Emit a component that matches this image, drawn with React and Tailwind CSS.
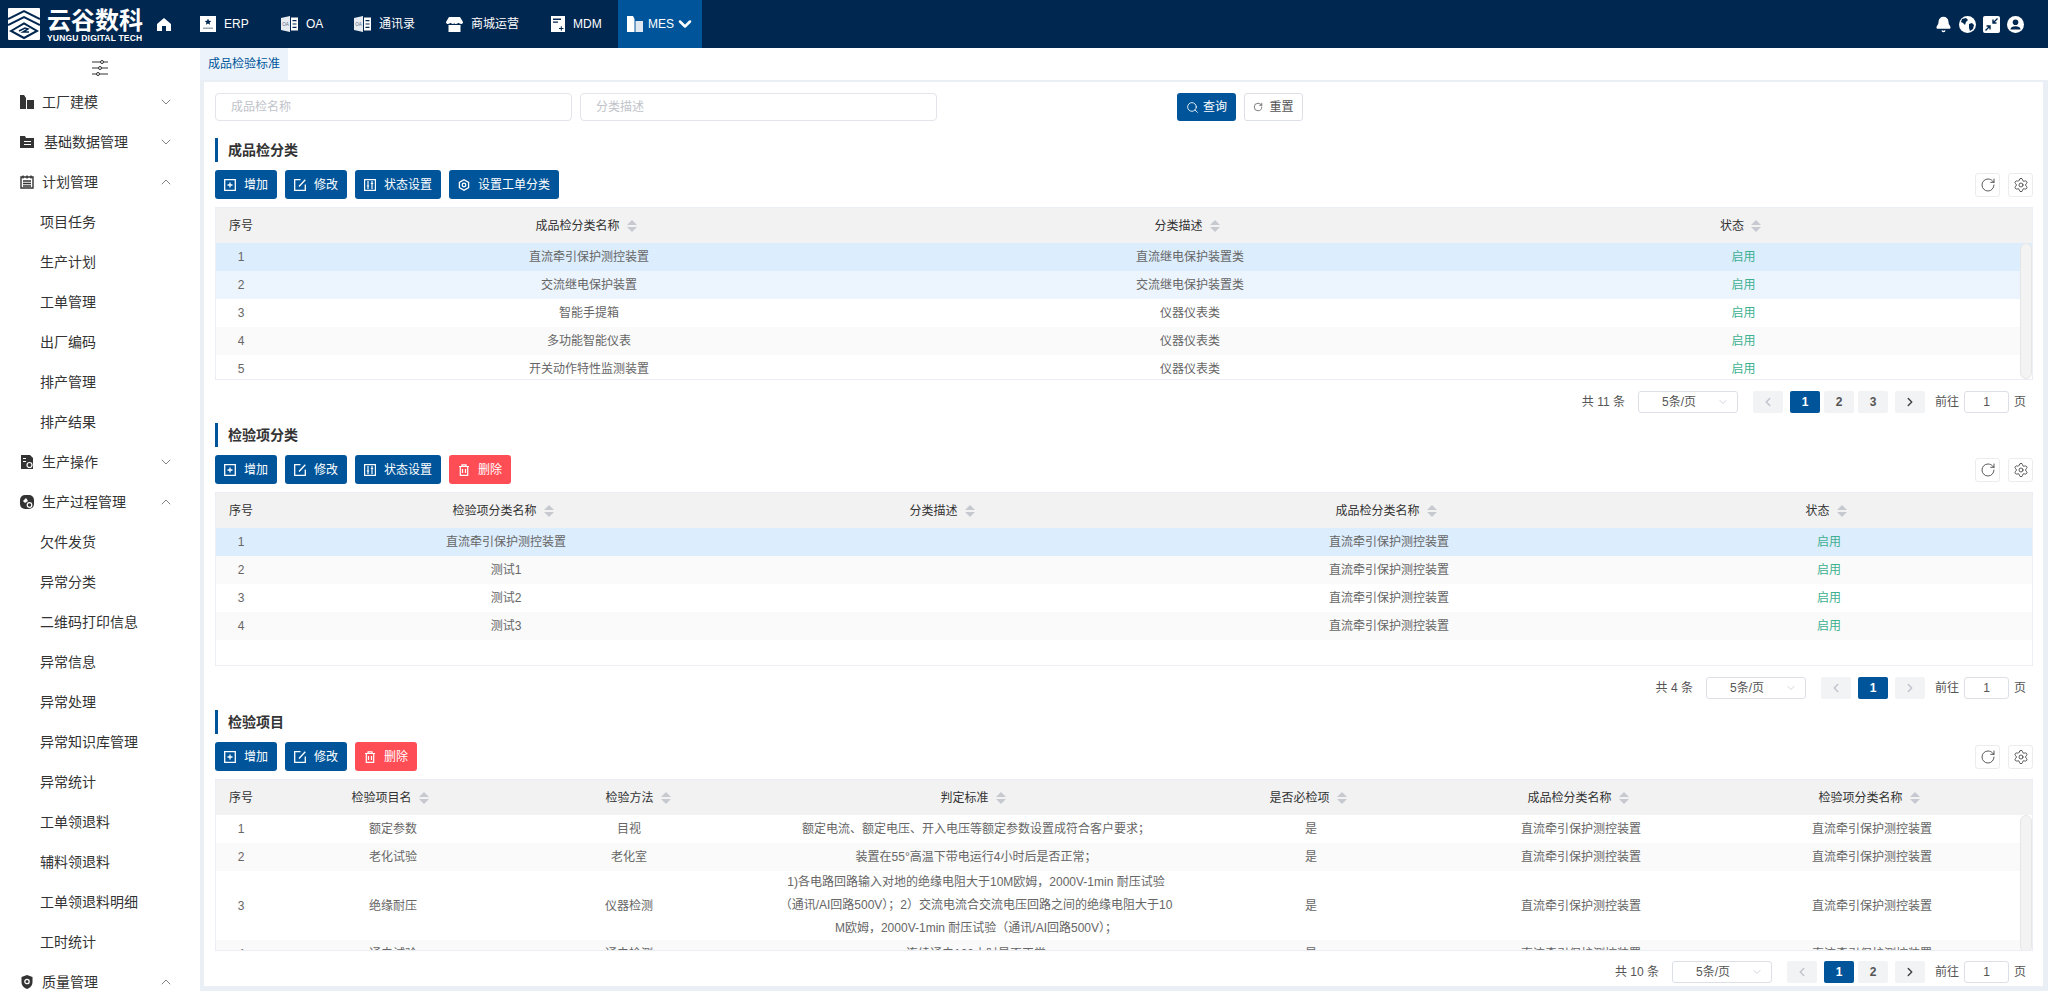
import { ChevronDown, ChevronUp, ChevronLeft, ChevronRight, Search, RotateCw, Settings, Bell } from 'lucide-react';

const sideMenu = [
    { label: '工厂建模', icon: 'factory', open: false },
    { label: '基础数据管理', icon: 'folder', open: false },
    { label: '计划管理', icon: 'book', open: true, children: ['项目任务', '生产计划', '工单管理', '出厂编码', '排产管理', '排产结果'] },
    { label: '生产操作', icon: 'op', open: false },
    { label: '生产过程管理', icon: 'proc', open: true, children: ['欠件发货', '异常分类', '二维码打印信息', '异常信息', '异常处理', '异常知识库管理', '异常统计', '工单领退料', '辅料领退料', '工单领退料明细', '工时统计'] },
    { label: '质量管理', icon: 'shield', open: true },
];

function MenuIcon({ type }) {
    if (type === 'factory') return (
        <svg viewBox="0 0 14 14" className="w-[14px] h-[14px]" fill="#333"><path d="M0 0h4l2 3v11H0z" /><path d="M7 5h7v9H7z" /></svg>
    );
    if (type === 'folder') return (
        <svg viewBox="0 0 14 14" className="w-[14px] h-[14px]" fill="#333"><path d="M0 1h5l1 2h8v10H0z" /><path d="M4 6h7v1H4zM4 9h7v1H4z" fill="#fff" /></svg>
    );
    if (type === 'book') return (
        <svg viewBox="0 0 14 14" className="w-[14px] h-[14px]" fill="none" stroke="#333" strokeWidth="1.4"><path d="M1 2h12v11H1zM3 .5v3M7 .5v3M11 .5v3M3 6h8M3 8.500h8M3 11h8" /></svg>
    );
    if (type === 'op') return (
        <svg viewBox="0 0 14 14" className="w-[14px] h-[14px]"><path d="M1 0h9l3 3v11H1z" fill="#333" /><path d="M3 3h3v1H3zM3 6h3v1H3z" fill="#fff" /><circle cx="9.500" cy="10" r="2.500" fill="none" stroke="#fff" strokeWidth="1.200" /></svg>
    );
    if (type === 'proc') return (
        <svg viewBox="0 0 14 14" className="w-[14px] h-[14px]"><rect width="14" height="14" rx="5" fill="#333" /><path d="M3 6l3-3 2 3-3 2z" fill="#fff" /><circle cx="9.500" cy="10" r="2.300" fill="none" stroke="#fff" strokeWidth="1.200" /></svg>
    );
    return (
        <svg viewBox="0 0 14 14" className="w-[14px] h-[14px]"><path d="M7 0l5.500 2v5c0 3.500-2.500 6-5.500 7-3-1-5.500-3.500-5.500-7V2z" fill="#333" /><circle cx="7" cy="6.500" r="2.200" fill="none" stroke="#fff" strokeWidth="1.300" /></svg>
    );
}

function Logo() {
    return (
        <div className="flex items-center w-[157px] pl-[8px] shrink-0">
            <svg viewBox="0 0 32 32" className="w-[32px] h-[32px] shrink-0">
                <rect width="32" height="32" rx="1" fill="#fff" />
                <path d="M0 11 16 3l16 8M0 17 16 9l16 8" fill="none" stroke="#00274f" strokeWidth="2" />
                <path d="M3 23 16 15.500 29 23 16 30z" fill="none" stroke="#00274f" strokeWidth="2" />
                <path d="M11 23 17 20l3 1-5 3 6 0" fill="none" stroke="#00274f" strokeWidth="1.500" />
            </svg>
            <div className="ml-[7px] pt-[3px] flex flex-col text-white">
                <span className="text-[24px] leading-[24px] font-bold whitespace-nowrap">云谷数科</span>
                <span className="text-[8.5px] leading-[10px] font-bold tracking-[0.2px] whitespace-nowrap">YUNGU DIGITAL TECH</span>
            </div>
        </div>
    );
}

function NavGlyph({ type }) {
    if (type === 'erp') return (
        <svg viewBox="0 0 16 16" className="w-[16px] h-[16px]"><path d="M0 0h16v16H0z" fill="#fff" /><path d="M8 2.500l1 2.200 2.300.2-1.700 1.500.5 2.300L8 7.600 5.900 8.700l.5-2.300L4.700 4.900 7 4.700z" fill="#00274f" /><path d="M3 11.500h10V13H3z" fill="#9aa7b5" /></svg>
    );
    if (type === 'book') return (
        <svg viewBox="0 0 17 16" className="w-[17px] h-[16px]">
            <path d="M0 2l9-2v16l-9-2z" fill="#e6ebf1" />
            <path d="M10 1.500h7v13h-7z" fill="#fff" />
            <path d="M11.500 4h4v1.200h-4zM11.500 7.400h4v1.200h-4zM11.500 10.800h4V12h-4z" fill="#00274f" />
            <text x="1.200" y="10" fontSize="4.500" fill="#5b6b7d">OA</text>
        </svg>
    );
    if (type === 'shop') return (
        <svg viewBox="0 0 17 15" className="w-[17px] h-[15px]"><path d="M3 0h11l3 5c0 1.500-1 2-2 2s-2-.5-2.500-1.200C12 6.500 11 7 10 7s-1.500-.5-1.500-.8C8 6.500 7 7 6.500 7S5 6.500 4.500 5.800C4 6.500 3 7 2 7S0 6.500 0 5z" fill="#fff" /><path d="M2.500 8h12v7h-12z" fill="#fff" /></svg>
    );
    if (type === 'mdm') return (
        <svg viewBox="0 0 14 16" className="w-[14px] h-[16px]"><path d="M0 0h14v16H0z" fill="#fff" /><path d="M2 2.500h8v1.400H2zM2 5.500h5v1.200H2zM8 12h4.500v1H8zM9.800 10.200h1v4.500h-1z" fill="#00274f" /></svg>
    );
    return (
        <svg viewBox="0 0 16 16" className="w-[16px] h-[16px]" fill="#fff"><path d="M0 0h6l1.500 3v13H0z" /><path d="M8.500 5H16v11H8.500z" fill="#dfe7f0" /></svg>
    );
}

const navItems = [
    { label: 'ERP', icon: 'erp', w: 'w-[81px]' },
    { label: 'OA', icon: 'book', w: 'w-[73px]' },
    { label: '通讯录', icon: 'book', w: 'w-[92px]' },
    { label: '商城运营', icon: 'shop', w: 'w-[105px]' },
    { label: 'MDM', icon: 'mdm', w: 'w-[67px]' },
];

function TopBar() {
    return (
        <header className="h-12 bg-[#00274f] flex items-center text-white shrink-0">
            <Logo />
            <svg viewBox="0 0 14 13" className="w-[14px] h-[13px] mr-[29px] shrink-0" fill="#fff"><path d="M7 0l7 6v7H9V8H5v5H0V6z" /></svg>
            {navItems.map(item => (
                <div key={item.label} className={`${item.w} flex items-center gap-[8px] text-xs shrink-0`}>
                    <NavGlyph type={item.icon} />
                    <span>{item.label}</span>
                </div>
            ))}
            <div className="w-[84px] h-12 bg-[#00559a] flex items-center pl-[9px] text-xs shrink-0">
                <NavGlyph type="mes" />
                <span className="ml-[5px]">MES</span>
                <ChevronDown className="w-[20px] h-[20px] ml-[1px]" strokeWidth={3} />
            </div>
            <div className="ml-auto flex items-center gap-[7px] pr-[24px]">
                <Bell className="w-[17px] h-[17px]" fill="#fff" />
                <svg viewBox="0 0 17 17" className="w-[17px] h-[17px]">
                    <circle cx="8.500" cy="8.500" r="8.500" fill="#fff" />
                    <path d="M3 3l4-1 2 2-2 2-1 3-2-2-2-1zM10 8l3-1 2 2-1 4-3 2-1-3z" fill="#00274f" />
                </svg>
                <svg viewBox="0 0 17 17" className="w-[17px] h-[17px]">
                    <rect width="17" height="17" rx="2" fill="#fff" />
                    <path d="M14.500 2.500 10 7M10 3.500V7h3.500M2.500 14.500 7 10M7 13.500V10H3.500" fill="none" stroke="#00274f" strokeWidth="1.400" />
                </svg>
                <svg viewBox="0 0 17 17" className="w-[17px] h-[17px]">
                    <circle cx="8.500" cy="8.500" r="8.500" fill="#fff" />
                    <circle cx="8.500" cy="6.200" r="2.800" fill="#00274f" />
                    <path d="M3.500 13.500c0-2.200 2.200-3.200 5-3.200s5 1 5 3.200z" fill="#00274f" />
                </svg>
            </div>
        </header>
    );
}

function Sidebar() {
    return (
        <aside className="w-[200px] shrink-0 bg-white overflow-hidden text-sm text-[#333]">
            <div className="h-[34px] flex justify-center pt-[12px]">
                <svg viewBox="0 0 16 16" className="w-[16px] h-[16px]" fill="#fff" stroke="#333" strokeWidth="1">
                    <path d="M0 2h16M0 8h16M0 14h16" />
                    <circle cx="10" cy="2" r="1.500" />
                    <circle cx="8" cy="8" r="1.500" />
                    <circle cx="6" cy="14" r="1.500" />
                </svg>
            </div>
            {sideMenu.map(menu => (
                <div key={menu.label}>
                    <div className="h-10 flex items-center pl-[20px] pr-[26px]">
                        <MenuIcon type={menu.icon} />
                        <span className={menu.icon === 'folder' ? 'ml-[10px]' : 'ml-[8px]'}>{menu.label}</span>
                        {menu.open
                            ? <ChevronUp className="w-[16px] h-[16px] ml-auto text-[#555]" strokeWidth={1.1} />
                            : <ChevronDown className="w-[16px] h-[16px] ml-auto text-[#555]" strokeWidth={1.1} />}
                    </div>
                    {menu.children && menu.children.map(c => (
                        <div key={c} className="h-10 flex items-center pl-[40px]">{c}</div>
                    ))}
                </div>
            ))}
        </aside>
    );
}

function IconAdd() {
    return <svg viewBox="0 0 12 12" className="w-[12px] h-[12px]" fill="none" stroke="#fff" strokeWidth="1.300"><path d="M.7.700h10.600v10.600H.7zM6 3.500v5M3.500 6h5" /></svg>;
}

function IconEdit() {
    return <svg viewBox="0 0 12 12" className="w-[12px] h-[12px]" fill="none" stroke="#fff" strokeWidth="1.300"><path d="M6.500.7H.7v10.600h10.600V5.500M5 7.500 11.300.7" /></svg>;
}

function IconStatus() {
    return <svg viewBox="0 0 12 12" className="w-[12px] h-[12px]" fill="none" stroke="#fff" strokeWidth="1.200"><path d="M.6.600h10.800v10.800H.6zM4 2v8M8 2v8M2.800 7h2.400M6.800 4.500h2.400" /></svg>;
}

function IconGear() {
    return <svg viewBox="0 0 12 12" className="w-[12px] h-[12px]" fill="none" stroke="#fff" strokeWidth="1.300"><path d="M6 .8 10.600 3.400v5.200L6 11.200 1.400 8.600V3.400z" /><circle cx="6" cy="6" r="1.800" /></svg>;
}

function IconTrash() {
    return <svg viewBox="0 0 12 12" className="w-[12px] h-[12px]" fill="none" stroke="#fff" strokeWidth="1.200"><path d="M1 2.500h10M4 2.500V.8h4v1.700M2.300 2.500v8.800h7.400V2.500M4.500 5v4M7.500 5v4" /></svg>;
}

function Btn({ icon: Icon, label, danger }) {
    return (
        <button className={`h-[29px] px-[9px] rounded-[3px] flex items-center gap-[8px] text-xs text-white ${danger ? 'bg-[#ff4d55]' : 'bg-[#00559a]'}`}>
            <Icon />
            <span>{label}</span>
        </button>
    );
}

function SectionTitle({ children }) {
    return (
        <div className="h-6 border-l-[3px] border-[#00559a] pl-[10px] flex items-center text-sm font-bold text-[#333]">{children}</div>
    );
}

function Toolbar({ buttons }) {
    return (
        <div className="flex items-center justify-between mt-2">
            <div className="flex gap-2">
                {buttons.map(b => <Btn key={b.label} {...b} />)}
            </div>
            <div className="flex gap-2">
                <div className="w-[25px] h-6 border border-[#ececec] rounded-[3px] flex items-center justify-center">
                    <RotateCw className="w-[16px] h-[16px] text-[#333]" strokeWidth={1.2} />
                </div>
                <div className="w-[25px] h-6 border border-[#ececec] rounded-[3px] flex items-center justify-center">
                    <Settings className="w-[16px] h-[16px] text-[#333]" strokeWidth={1.2} />
                </div>
            </div>
        </div>
    );
}

function SortMark() {
    return (
        <span className="inline-flex flex-col gap-[2px] ml-[7px] align-middle">
            <span className="w-0 h-0 border-x-[5px] border-x-transparent border-b-[5px] border-b-[#c6c9d0]" />
            <span className="w-0 h-0 border-x-[5px] border-x-transparent border-t-[5px] border-t-[#c6c9d0]" />
        </span>
    );
}

function Pager({ total, pages, disableNext, top }) {
    return (
        <div className={`flex items-center justify-end h-[22px] pr-[7px] text-xs text-[#555] ${top}`}>
            <span>共 {total} 条</span>
            <div className="w-[100px] h-[22px] ml-[13px] border border-[#dcdfe6] rounded-[3px] flex items-center justify-between pl-[23px] pr-[8px]">
                <span>5条/页</span>
                <ChevronDown className="w-[12px] h-[12px] text-[#c0c4cc]" strokeWidth={1.5} />
            </div>
            <div className="w-[30px] h-[22px] ml-[15px] mr-[7px] bg-[#f2f3f5] rounded-[2px] flex items-center justify-center">
                <ChevronLeft className="w-[14px] h-[14px] text-[#c0c4cc]" strokeWidth={2.5} />
            </div>
            {pages.map(p => (
                <div key={p} className={`w-[30px] h-[22px] mr-[4px] rounded-[2px] flex items-center justify-center font-bold ${p === 1 ? 'bg-[#00559a] text-white' : 'bg-[#f2f3f5] text-[#555]'}`}>{p}</div>
            ))}
            <div className="w-[30px] h-[22px] ml-[3px] bg-[#f2f3f5] rounded-[2px] flex items-center justify-center">
                <ChevronRight className={`w-[14px] h-[14px] ${disableNext ? 'text-[#c0c4cc]' : 'text-[#444]'}`} strokeWidth={2.5} />
            </div>
            <span className="ml-[10px]">前往</span>
            <div className="w-[45px] h-[22px] ml-[5px] border border-[#dcdfe6] rounded-[3px] flex items-center justify-center">1</div>
            <span className="ml-[5px]">页</span>
        </div>
    );
}

function Scrollbar() {
    return <div className="absolute right-0 top-0 bottom-0 w-[12px] rounded-full bg-[#f3f3f3] border border-[#e6e6e6]" />;
}

const t1Cols = 'grid-cols-[50px_646px_556px_551px]';
const t2Cols = 'grid-cols-[50px_480px_398px_490px_390px]';
const t3Cols = 'grid-cols-[50px_254px_218px_476px_194px_346px_236px]';

function HeadRow({ cols, titles }) {
    return (
        <div className={`grid ${cols} h-[35px] items-center bg-[#f2f2f2] text-xs text-[#333]`}>
            {titles.map((t, i) => (
                <div key={t} className={`text-center ${t === '检验方法' ? 'pl-[18px]' : i > 0 ? 'pr-[6px]' : ''}`}>
                    {t}{i > 0 && <SortMark />}
                </div>
            ))}
        </div>
    );
}

function Row({ cols, cells, bg, statusLast }) {
    return (
        <div className={`grid ${cols} h-7 items-center text-xs text-[#666] ${bg}`}>
            {cells.map((c, i) => (
                <div key={i} className={`text-center ${statusLast && i === cells.length - 1 ? 'text-[#3cb08f]' : ''}`}>{c}</div>
            ))}
        </div>
    );
}

const t1Rows = [
    ['1', '直流牵引保护测控装置', '直流继电保护装置类', '启用'],
    ['2', '交流继电保护装置', '交流继电保护装置类', '启用'],
    ['3', '智能手提箱', '仪器仪表类', '启用'],
    ['4', '多功能智能仪表', '仪器仪表类', '启用'],
    ['5', '开关动作特性监测装置', '仪器仪表类', '启用'],
];
const t1Bg = ['bg-[#dcedfd]', 'bg-[#ecf4fd]', 'bg-white', 'bg-[#fafafa]', 'bg-white'];

const t2Rows = [
    ['1', '直流牵引保护测控装置', '', '直流牵引保护测控装置', '启用'],
    ['2', '测试1', '', '直流牵引保护测控装置', '启用'],
    ['3', '测试2', '', '直流牵引保护测控装置', '启用'],
    ['4', '测试3', '', '直流牵引保护测控装置', '启用'],
];
const t2Bg = ['bg-[#dcedfd]', 'bg-[#fafafa]', 'bg-white', 'bg-[#fafafa]'];

const dc = '直流牵引保护测控装置';

export default function App() {
    return (
        <div className="w-[2048px] h-[991px] overflow-hidden flex flex-col bg-[#e9eff5] font-['Liberation_Sans','Noto_Sans_CJK_SC',sans-serif]">
            <TopBar />
            <div className="flex flex-1 min-h-0">
                <Sidebar />
                <main className="flex-1 min-w-0 flex flex-col">
                    <div className="h-8 bg-white flex shrink-0">
                        <div className="w-[88px] bg-[#ecf3fb] text-xs text-[#00559a] flex items-center justify-center">成品检验标准</div>
                    </div>
                    <div className="mt-[2px] ml-[4px] mr-[5px] h-[904px] bg-white pl-[11px] pr-[10px] pt-[11px] overflow-hidden">
                        {/* Search */}
                        <div className="flex items-center h-7">
                            <div className="w-[357px] h-7 border border-[#e2e4e9] rounded-[4px] px-[15px] flex items-center text-xs text-[#bfc3ca]">成品检名称</div>
                            <div className="w-[357px] h-7 ml-[8px] border border-[#e2e4e9] rounded-[4px] px-[15px] flex items-center text-xs text-[#bfc3ca]">分类描述</div>
                            <button className="h-7 w-[59px] ml-[240px] rounded-[3px] bg-[#00559a] text-white text-xs flex items-center justify-center gap-[4px]">
                                <Search className="w-[13px] h-[13px]" strokeWidth={1.6} />查询
                            </button>
                            <button className="h-7 w-[59px] ml-[8px] rounded-[3px] border border-[#dcdfe6] text-[#555] text-xs flex items-center justify-center gap-[6px]">
                                <RotateCw className="w-[10px] h-[10px]" strokeWidth={1.8} />重置
                            </button>
                        </div>

                        {/* 成品检分类 */}
                        <div className="mt-[17px]">
                            <SectionTitle>成品检分类</SectionTitle>
                            <Toolbar buttons={[
                                { icon: IconAdd, label: '增加' },
                                { icon: IconEdit, label: '修改' },
                                { icon: IconStatus, label: '状态设置' },
                                { icon: IconGear, label: '设置工单分类' },
                            ]} />
                            <div className="mt-2 border border-[#ebeef5] h-[173px] overflow-hidden">
                                <HeadRow cols={t1Cols} titles={['序号', '成品检分类名称', '分类描述', '状态']} />
                                <div className="relative h-[136px] overflow-hidden">
                                    {t1Rows.map((r, i) => <Row key={r[0]} cols={t1Cols} cells={r} bg={t1Bg[i]} statusLast />)}
                                    <Scrollbar />
                                </div>
                            </div>
                            <Pager total={11} pages={[1, 2, 3]} top="mt-[11px]" />
                        </div>

                        {/* 检验项分类 */}
                        <div className="mt-[10px]">
                            <SectionTitle>检验项分类</SectionTitle>
                            <Toolbar buttons={[
                                { icon: IconAdd, label: '增加' },
                                { icon: IconEdit, label: '修改' },
                                { icon: IconStatus, label: '状态设置' },
                                { icon: IconTrash, label: '删除', danger: true },
                            ]} />
                            <div className="mt-2 border border-[#ebeef5] h-[174px] overflow-hidden">
                                <HeadRow cols={t2Cols} titles={['序号', '检验项分类名称', '分类描述', '成品检分类名称', '状态']} />
                                {t2Rows.map((r, i) => <Row key={r[0]} cols={t2Cols} cells={r} bg={t2Bg[i]} statusLast />)}
                            </div>
                            <Pager total={4} pages={[1]} disableNext top="mt-[11px]" />
                        </div>

                        {/* 检验项目 */}
                        <div className="mt-[11px]">
                            <SectionTitle>检验项目</SectionTitle>
                            <Toolbar buttons={[
                                { icon: IconAdd, label: '增加' },
                                { icon: IconEdit, label: '修改' },
                                { icon: IconTrash, label: '删除', danger: true },
                            ]} />
                            <div className="mt-2 border border-[#ebeef5] h-[172px] overflow-hidden">
                                <HeadRow cols={t3Cols} titles={['序号', '检验项目名', '检验方法', '判定标准', '是否必检项', '成品检分类名称', '检验项分类名称']} />
                                <div className="relative h-[137px] overflow-hidden">
                                    <Row cols={t3Cols} bg="bg-white" cells={['1', '额定参数', '目视', '额定电流、额定电压、开入电压等额定参数设置成符合客户要求；', '是', dc, dc]} />
                                    <Row cols={t3Cols} bg="bg-[#fafafa]" cells={['2', '老化试验', '老化室', '装置在55°高温下带电运行4小时后是否正常；', '是', dc, dc]} />
                                    <div className={`grid ${t3Cols} h-[69px] items-center text-xs text-[#666] bg-white`}>
                                        <div className="text-center">3</div>
                                        <div className="text-center">绝缘耐压</div>
                                        <div className="text-center">仪器检测</div>
                                        <div className="text-center leading-[23px] whitespace-nowrap">
                                            <div>1)各电路回路输入对地的绝缘电阻大于10M欧姆，2000V-1min 耐压试验</div>
                                            <div>（通讯/AI回路500V）；2）交流电流合交流电压回路之间的绝缘电阻大于10</div>
                                            <div>M欧姆，2000V-1min 耐压试验（通讯/AI回路500V）；</div>
                                        </div>
                                        <div className="text-center">是</div>
                                        <div className="text-center">{dc}</div>
                                        <div className="text-center">{dc}</div>
                                    </div>
                                    <Row cols={t3Cols} bg="bg-[#fafafa]" cells={['4', '通电试验', '通电检测', '连续通电100小时是否正常', '是', dc, dc]} />
                                    <Scrollbar />
                                </div>
                            </div>
                            <Pager total={10} pages={[1, 2]} top="mt-[10px]" />
                        </div>
                    </div>
                </main>
            </div>
        </div>
    );
}
